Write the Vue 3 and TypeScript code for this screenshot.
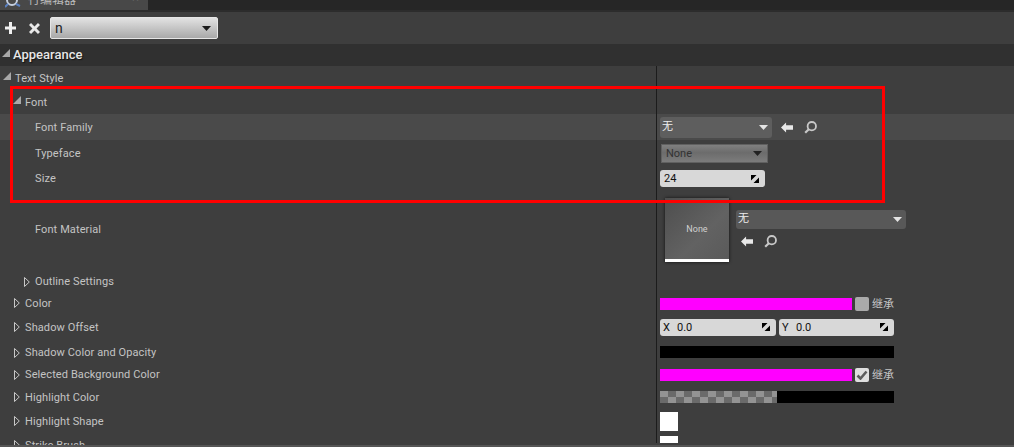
<script setup lang="ts">
</script>

<template>
  <div class="app">
    <div class="tabbar">
      <div class="tab">
        <svg class="tab-icon" width="16" height="16" viewBox="0 0 16 16"><circle cx="7" cy="0" r="5" fill="none" stroke="#c4cede" stroke-width="2"/><path d="M3 4 L0 7 M11 4 L15 6" stroke="#5a80c0" stroke-width="2"/></svg>
        <span class="tab-text">行编辑器</span>
        <span class="tab-close">×</span>
      </div>
    </div>
    <div class="toolbar">
      <svg class="tool-add" width="11" height="12" viewBox="0 0 11 12"><path d="M4 0h3v4.5h4v3H7V12H4V7.500H0v-3h4z" fill="#f0f0f0"/></svg>
      <svg class="tool-del" width="11" height="11" viewBox="0 0 12 12"><path d="M2.200 0 6 3.800 9.800 0 12 2.200 8.200 6 12 9.800 9.800 12 6 8.200 2.200 12 0 9.800 3.800 6 0 2.200z" fill="#e8e8e8"/></svg>
      <div class="tool-combo">
        <span>n</span>
        <svg width="9" height="5" viewBox="0 0 9 5"><path d="M0 0h9L4.500 5z" fill="#1c1c1c"/></svg>
      </div>
    </div>
    <div class="section">
      <svg class="tri-open" width="8" height="8" viewBox="0 0 8 8"><path d="M0 8h8V0z" fill="#a8a8a8"/></svg>
      <span>Appearance</span>
    </div>
    <div class="list">
      <div class="row h24">
        <div class="name ind0b"><svg class="tri-open" width="8" height="8" viewBox="0 0 8 8"><path d="M0 8h8V0z" fill="#a8a8a8"/></svg><span>Text Style</span></div>
        <div class="val"></div>
      </div>
      <div class="row h24">
        <div class="name ind1"><svg class="tri-open" width="8" height="8" viewBox="0 0 8 8"><path d="M0 8h8V0z" fill="#a8a8a8"/></svg><span>Font</span></div>
        <div class="val"></div>
      </div>
      <div class="row h26 hot">
        <div class="name plain"><span>Font Family</span></div>
        <div class="val">
          <div class="asset-combo family"><span>无</span><svg width="9" height="5" viewBox="0 0 9 5"><path d="M0 0h9L4.500 5z" fill="#e4e4e4"/></svg></div>
          <svg class="ic-back" width="12" height="11" viewBox="0 0 13 11"><path d="M0 5.500 5.500 0v3H13v5H5.500v3z" fill="#e8e8e8"/></svg>
          <svg class="ic-find" width="13" height="13" viewBox="0 0 13 13"><circle cx="7.800" cy="5.200" r="4.200" fill="none" stroke="#c8c8c8" stroke-width="1.800"/><path d="M4.800 8.200 1.200 11.800" stroke="#c8c8c8" stroke-width="2.200"/></svg>
        </div>
      </div>
      <div class="row h26">
        <div class="name plain"><span>Typeface</span></div>
        <div class="val">
          <div class="typeface"><span>None</span><svg width="9" height="5" viewBox="0 0 9 5"><path d="M0 0h9L4.500 5z" fill="#222"/></svg></div>
        </div>
      </div>
      <div class="row h25">
        <div class="name plain"><span>Size</span></div>
        <div class="val">
          <div class="num size"><span>24</span><svg width="8" height="8" viewBox="0 0 8 8"><path d="M0 0h5.500L0 5.500zM8 2.500V8H2.500z" fill="#000"/></svg></div>
        </div>
      </div>
      <div class="row h77">
        <div class="name plain"><span>Font Material</span></div>
        <div class="val mat">
          <div class="thumb"><span>None</span></div>
          <div class="mat-side">
            <div class="asset-combo material"><span>无</span><svg width="9" height="5" viewBox="0 0 9 5"><path d="M0 0h9L4.500 5z" fill="#e4e4e4"/></svg></div>
            <div class="mat-icons">
              <svg width="12" height="11" viewBox="0 0 13 11"><path d="M0 5.500 5.500 0v3H13v5H5.500v3z" fill="#e8e8e8"/></svg>
              <svg width="13" height="13" viewBox="0 0 13 13"><circle cx="7.800" cy="5.200" r="4.200" fill="none" stroke="#c8c8c8" stroke-width="1.800"/><path d="M4.800 8.200 1.200 11.800" stroke="#c8c8c8" stroke-width="2.200"/></svg>
            </div>
          </div>
        </div>
      </div>
      <div class="row h25">
        <div class="name ind2 down2"><svg width="6" height="10" viewBox="0 0 6 10"><path d="M.5.500 5.300 5 .5 9.500z" fill="none" stroke="#c8c8c8"/></svg><span>Outline Settings</span></div>
        <div class="val"></div>
      </div>
      <div class="row h22">
        <div class="name ind3 up2"><svg width="6" height="10" viewBox="0 0 6 10"><path d="M.5.500 5.300 5 .5 9.500z" fill="none" stroke="#c8c8c8"/></svg><span>Color</span></div>
        <div class="val">
          <div class="swatch magenta"></div>
          <div class="check off"></div>
          <span class="inherit">继承</span>
        </div>
      </div>
      <div class="row h24">
        <div class="name ind3"><svg width="6" height="10" viewBox="0 0 6 10"><path d="M.5.500 5.300 5 .5 9.500z" fill="none" stroke="#c8c8c8"/></svg><span>Shadow Offset</span></div>
        <div class="val pair">
          <div class="num vec"><span class="axis"><b>X</b>0.0</span><svg width="8" height="8" viewBox="0 0 8 8"><path d="M0 0h5.500L0 5.500zM8 2.500V8H2.500z" fill="#000"/></svg></div>
          <div class="num vec second"><span class="axis"><b>Y</b>0.0</span><svg width="8" height="8" viewBox="0 0 8 8"><path d="M0 0h5.500L0 5.500zM8 2.500V8H2.500z" fill="#000"/></svg></div>
        </div>
      </div>
      <div class="row h25">
        <div class="name ind3 down2"><svg width="6" height="10" viewBox="0 0 6 10"><path d="M.5.500 5.300 5 .5 9.500z" fill="none" stroke="#c8c8c8"/></svg><span>Shadow Color and Opacity</span></div>
        <div class="val"><div class="swatch black"></div></div>
      </div>
      <div class="row h21">
        <div class="name ind3"><svg width="6" height="10" viewBox="0 0 6 10"><path d="M.5.500 5.300 5 .5 9.500z" fill="none" stroke="#c8c8c8"/></svg><span>Selected Background Color</span></div>
        <div class="val">
          <div class="swatch magenta"></div>
          <div class="check on"><svg width="12" height="10" viewBox="0 0 12 10"><path d="M1.500 5.500 4.500 8.500 10.500 1.500" fill="none" stroke="#5c5c5c" stroke-width="2.600"/></svg></div>
          <span class="inherit">继承</span>
        </div>
      </div>
      <div class="row h24">
        <div class="name ind3"><svg width="6" height="10" viewBox="0 0 6 10"><path d="M.5.500 5.300 5 .5 9.500z" fill="none" stroke="#c8c8c8"/></svg><span>Highlight Color</span></div>
        <div class="val"><div class="swatch alpha"><div class="alpha-half"></div></div></div>
      </div>
      <div class="row h24">
        <div class="name ind3"><svg width="6" height="10" viewBox="0 0 6 10"><path d="M.5.500 5.300 5 .5 9.500z" fill="none" stroke="#c8c8c8"/></svg><span>Highlight Shape</span></div>
        <div class="val"><div class="brush"></div></div>
      </div>
      <div class="row h24 last">
        <div class="name ind3"><svg width="6" height="10" viewBox="0 0 6 10"><path d="M.5.500 5.300 5 .5 9.500z" fill="none" stroke="#c8c8c8"/></svg><span>Strike Brush</span></div>
        <div class="val"><div class="brush"></div></div>
      </div>
    </div>
    <div class="bottom"></div>
    <div class="redbox"></div>
  </div>
</template>

<style>
html, body { margin: 0; background: #3e3e3e; }
</style>

<style scoped>
.app {
  position: relative;
  width: 1014px;
  height: 447px;
  display: flex;
  flex-direction: column;
  overflow: hidden;
  background: #3e3e3e;
  color: #c4c4c4;
  font-family: Roboto, "Noto Sans CJK SC", sans-serif;
  font-size: 11px;
}
.tabbar { flex: none; height: 10px; background: #262626; border-bottom: 2px solid #2c2c2c; overflow: hidden; }
.tab { width: 148px; height: 10px; background: #484848; display: flex; align-items: flex-start; position: relative; overflow: hidden; }
.tab-icon { flex: none; margin: 0 0 0 5px; }
.tab-text { font-size: 12px; line-height: 16px; height: 16px; margin: -8px 0 0 7px; flex: none; color: #bbb; }
.tab-close { position: absolute; right: 9px; top: -10px; font-size: 13px; color: #777; }
.toolbar { height: 32px; flex: none; display: flex; align-items: center; padding: 0 0 0 5px; background: #3e3e3e; }
.tool-add { flex: none; }
.tool-del { flex: none; margin-left: 13px; }
.tool-combo {
  margin-left: 10px; width: 168px; height: 22px; box-sizing: border-box;
  border: 1px solid #e6e6e6; border-radius: 2px;
  background: linear-gradient(#e2e2e2, #a9a9a9);
  display: flex; align-items: center; justify-content: space-between;
  padding: 0 6px 0 4px; color: #222; font-size: 14px;
}
.section {
  height: 22px; box-sizing: border-box; padding: 0 0 2px 2px; flex: none; background: #303030; display: flex; align-items: center;
  gap: 3px; color: #e6e6e6; font-size: 13px; font-weight: 500;
  text-shadow: 1px 1px 1px #111;
}
.section .tri-open { position: relative; top: -1px; }
.list { flex: 1; min-height: 0; overflow: hidden; }
.row { display: flex; }
.h21 { height: 21px; } .h22 { height: 22px; } .h24 { height: 24px; } .h25 { height: 25px; } .h26 { height: 26px; } .h77 { height: 77px; }
.hot { background: #4a4a4a; }
.name { width: 656px; flex: none; display: flex; align-items: center; box-sizing: border-box; letter-spacing: .1px; }
.name span { white-space: nowrap; }
.up2 { padding-bottom: 2px; }
.down2 { padding-top: 2px; }
.tri-open { flex: none; }
.ind0b { padding-left: 3px; gap: 4px; }
.ind0b .tri-open, .ind1 .tri-open { position: relative; top: -2px; }
.ind1 { padding-left: 13px; gap: 4px; }
.plain { padding-left: 35px; }
.ind2 { padding-left: 24px; gap: 5px; }
.ind3 { padding-left: 14px; gap: 5px; }
.name svg { flex: none; }
.val {
  flex: 1; display: flex; align-items: center; border-left: 1px solid #1c1c1c;
  padding-left: 3px; box-sizing: border-box; min-width: 0;
}
.asset-combo {
  box-sizing: border-box; display: flex; align-items: center; justify-content: space-between;
  background: #5e5e5e; border-radius: 3px; padding: 0 4px 0 2px; color: #eee; font-size: 11px; flex: none;
}
.asset-combo span { line-height: 14px; }
.material span { margin-bottom: 2px; }
.family { width: 112px; height: 21px; }
.material { width: 170px; height: 19px; background: #585858; }
.ic-back { margin-left: 9px; flex: none; }
.ic-find { margin-left: 11px; flex: none; }
.typeface {
  margin-left: 1px; width: 107px; height: 19px; box-sizing: border-box; display: flex; align-items: center;
  justify-content: space-between; padding: 0 5px 0 4px; color: #333; font-size: 11px;
  background: linear-gradient(#808080, #6c6c6c 45%, #7c7c7c); border: 1px solid #606060;
}
.num {
  box-sizing: border-box; background: #d8d8d8; border-radius: 3px; display: flex; align-items: center;
  justify-content: space-between; color: #111; font-size: 11px; padding: 0 6px 0 4px; height: 17px; flex: none;
}
.size { width: 105px; }
.pair { gap: 3px; }
.vec { width: 116px; padding-left: 3px; }
.second { width: 115px; }
.axis { display: flex; }
.axis b { font-weight: 400; width: 14px; }
.mat { align-items: flex-start; padding-left: 8px; padding-top: 7px; }
.thumb {
  width: 64px; height: 64px; box-sizing: border-box; flex: none; display: flex; align-items: center; justify-content: center;
  background: linear-gradient(135deg, #4e4e4e, #626262 60%, #5a5a5a); border-bottom: 3px solid #fff;
  box-shadow: 0 0 3px #111; color: #d0d0d0; font-size: 9px;
}
.mat-side { margin-left: 7px; padding-top: 12px; }
.mat-icons { display: flex; align-items: center; gap: 11px; padding: 6px 0 0 5px; }
.swatch { height: 12px; flex: none; }
.magenta { width: 192px; background: #ff00ff; }
.black { width: 234px; background: #000; }
.alpha { width: 234px; background: #000; }
.alpha-half {
  width: 117px; height: 12px;
  background: repeating-conic-gradient(#6a6a6a 0 25%, #939393 0 50%) 0 0 / 16px 12px;
}
.check { width: 14px; height: 14px; margin-left: 3px; border-radius: 2px; flex: none; display: flex; align-items: center; justify-content: center; }
.off { background: #aaaaaa; }
.on { background: #dedede; }
.inherit { margin: 0 0 2px 3px; font-size: 11px; color: #c4c4c4; white-space: nowrap; }
.brush { width: 18px; height: 19px; background: #fff; flex: none; }
.last .brush { height: 7px; }
.last .val { align-self: flex-start; height: 10px; align-items: flex-start; padding-top: 3px; }
.bottom { height: 2px; flex: none; background: #555; }
.redbox {
  position: absolute; left: 10px; top: 86px; width: 875px; height: 117px; box-sizing: border-box;
  border: 3px solid #ff0000; pointer-events: none;
}
</style>
